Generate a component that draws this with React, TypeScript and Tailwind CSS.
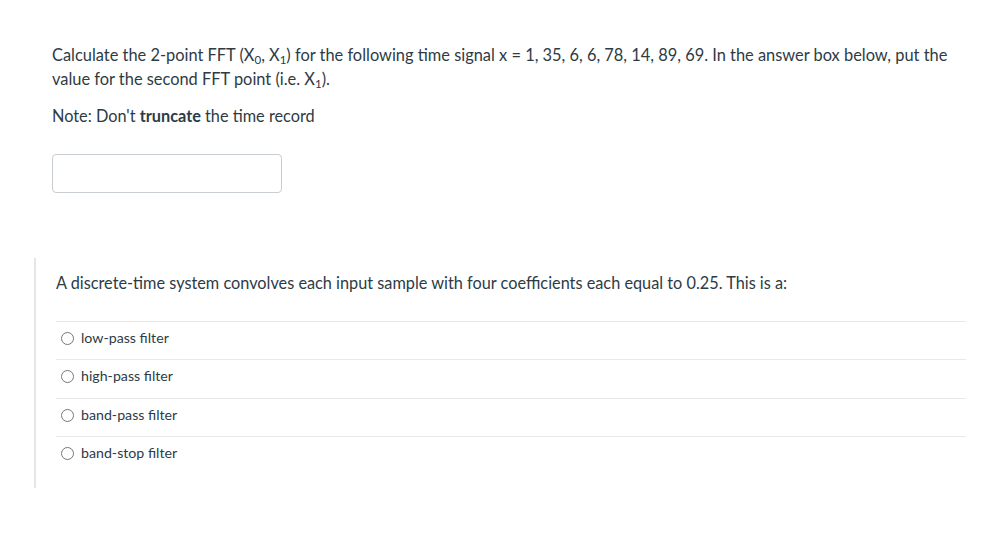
import { FC } from "react";

const options = ["low-pass filter", "high-pass filter", "band-pass filter", "band-stop filter"];

const Option: FC<{ label: string }> = ({ label }) => (
  <label className="flex items-start h-[38.4px] border-t border-[#e8e8e8] pl-[5px] pt-[7px]">
    <span className="mt-[3px] w-[13px] h-[13px] rounded-full border border-[#777] bg-white shrink-0" />
    <span className="ml-[7px] text-[14.2px] leading-[18px] text-[#2d3b45]">{label}</span>
  </label>
);

export default function App() {
  return (
    <div
      className="w-[998px] h-[555px] bg-white text-[#2d3b45] overflow-hidden"
      style={{ fontFamily: "Lato, 'Noto Sans', sans-serif" }}
    >
      <div className="pt-[43px] pl-[52px] w-[966px]">
        <p className="text-[16.4px] leading-[24px]">
          Calculate the 2-point FFT (X<sub className="text-[11.5px] leading-none">0</sub>, X
          <sub className="text-[11.5px] leading-none">1</sub>) for the following time signal x = 1, 35, 6, 6, 78, 14,
          89, 69. In the answer box below, put the value for the second FFT point (i.e. X
          <sub className="text-[11.5px] leading-none">1</sub>).
        </p>
        <p className="text-[16.3px] leading-[24px] mt-[13px]">
          Note: Don't <strong className="font-bold">truncate</strong> the time record
        </p>
        <input
          type="text"
          className="mt-[26px] block w-[230px] h-[39px] border border-[#c7cdd1] rounded-[4px] bg-white"
        />
      </div>

      <div className="ml-[34px] mt-[65px] w-[932px] border-l-2 border-[#e6e6e6] pl-[20px] pt-[13px] pb-[13px]">
        <p className="text-[16.3px] leading-[24px]">
          A discrete-time system convolves each input sample with four coefficients each equal to 0.25. This is a:
        </p>
        <div className="mt-[26px]">
          {options.map((o) => (
            <Option key={o} label={o} />
          ))}
        </div>
      </div>
    </div>
  );
}
